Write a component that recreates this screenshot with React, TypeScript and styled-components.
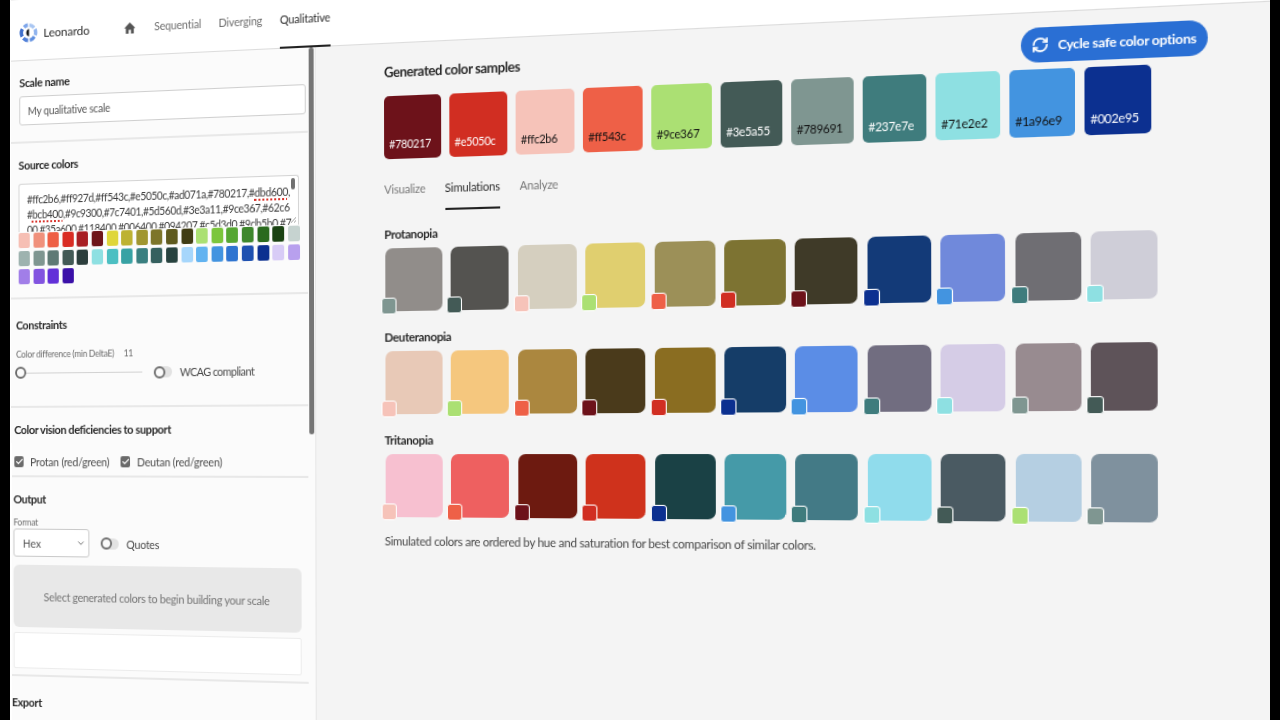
import React from 'react';
import styled, { createGlobalStyle } from 'styled-components';
import { RefreshCw, ChevronDown, Check } from 'lucide-react';

const GlobalStyle = createGlobalStyle`
  html, body {
    margin: 0;
    padding: 0;
    background: #000;
  }
  * {
    box-sizing: border-box;
  }
`;

const Stage = styled.div`
  width: 1280px;
  height: 720px;
  overflow: hidden;
  background: #fff;
  border-left: 10px solid #000;
  border-right: 10px solid #000;
`;

const Page = styled.div`
  width: 1200px;
  height: 760px;
  display: flex;
  flex-direction: column;
  padding-top: 6px;
  background: #fff;
  color: #2c2c2c;
  font-family: 'Lato', 'Noto Sans', sans-serif;
  transform-origin: 630px 440px;
  transform: perspective(1000px) rotateY(-6.4deg) rotateZ(-0.1deg) scale(1.08);
  border-top: 1px solid #dedede;
`;

const Header = styled.header`
  height: 55px;
  flex: none;
  display: flex;
  align-items: center;
  padding-left: 9px;
  background: #fff;
  border-bottom: 1px solid #dcdcdc;
`;

const Brand = styled.div`
  display: flex;
  align-items: center;
  gap: 6px;
  width: 111px;
  font-size: 12.2px;
  letter-spacing: -0.1px;
`;

const NavLink = styled.a<{ $active?: boolean }>`
  height: 55px;
  display: flex;
  align-items: center;
  margin-right: 18px;
  font-size: 11px;
  letter-spacing: -0.2px;
  color: ${(p) => (p.$active ? '#2c2c2c' : '#6f6f6f')};
  border-bottom: 2px solid ${(p) => (p.$active ? '#222' : 'transparent')};
  margin-bottom: -1px;
`;

const HomeLink = styled.span`
  display: flex;
  margin-right: 19px;
  color: #555;
`;

const Body = styled.div`
  flex: 1;
  display: flex;
  min-height: 0;
`;

const Sidebar = styled.aside`
  width: 317px;
  flex: none;
  display: flex;
  background: #fbfbfb;
  border-right: 1px solid #e6e6e6;
`;

const SideContent = styled.div`
  flex: 1;
  min-width: 0;
`;

const ScrollTrack = styled.div`
  width: 7px;
  flex: none;
  padding: 0 1px;
`;

const ScrollThumb = styled.div`
  height: 372px;
  border-radius: 3px;
  background: #757575;
`;

const Section = styled.section<{ $h: number; $indent: number; $top: number }>`
  height: ${(p) => p.$h}px;
  padding: ${(p) => p.$top}px 0 0 ${(p) => p.$indent}px;
  border-bottom: 2px solid #e8e8e8;
`;

const Label = styled.div`
  font-size: 11.5px;
  line-height: 14px;
  font-weight: 700;
  color: #2a2a2a;
  letter-spacing: -0.38px;
`;

const TextInput = styled.div`
  margin-top: 6px;
  width: 298px;
  height: 29px;
  padding-left: 8px;
  display: flex;
  align-items: center;
  font-size: 10.6px;
  letter-spacing: -0.2px;
  color: #555;
  background: #fff;
  border: 1px solid #cfcfcf;
  border-radius: 3px;
`;

const ColorArea = styled.div`
  position: relative;
  margin-top: 11px;
  width: 292px;
  height: 48px;
  padding: 8px 0 0 8px;
  overflow: hidden;
  font-size: 10.6px;
  line-height: 15px;
  letter-spacing: -0.4px;
  color: #3a3a3a;
  white-space: nowrap;
  background: #fff;
  border: 1px solid #d4d4d4;
  border-bottom: none;
  border-radius: 3px 3px 0 0;
`;

const Misspelt = styled.span`
  text-decoration: underline dotted #d8322a 1.5px;
  text-underline-offset: 2px;
`;

const AreaThumb = styled.span`
  position: absolute;
  top: 2px;
  right: 3px;
  width: 4px;
  height: 11px;
  border-radius: 2px;
  background: #707070;
`;

const ResizeGrip = styled.svg`
  position: absolute;
  right: 1px;
  bottom: 1px;
`;

const Palette = styled.div`
  margin-top: 1px;
  display: grid;
  grid-template-columns: repeat(19, 12px);
  grid-auto-rows: 15px;
  column-gap: 3.6px;
  row-gap: 3px;
`;

const Chip = styled.span<{ $color: string }>`
  border-radius: 2px;
  background: ${(p) => p.$color};
`;

const SmallText = styled.div<{ $mt?: number }>`
  margin-top: ${(p) => p.$mt ?? 0}px;
  font-size: 9px;
  line-height: 12px;
  color: #6e6e6e;
  letter-spacing: -0.33px;
`;

const FieldRow = styled.div<{ $gap: number; $mt?: number }>`
  display: flex;
  align-items: center;
  gap: ${(p) => p.$gap}px;
  margin-top: ${(p) => p.$mt ?? 0}px;
`;

const DiffRow = styled(SmallText)`
  display: flex;
  gap: 10px;
`;

const SliderTrack = styled.div`
  position: relative;
  width: 134px;
  height: 1px;
  background: #d2d2d2;
`;

const SliderThumb = styled.span`
  position: absolute;
  left: -1px;
  top: -6px;
  width: 12px;
  height: 12px;
  border-radius: 50%;
  background: #fbfbfb;
  border: 2px solid #6e6e6e;
`;

const ToggleTrack = styled.span`
  position: relative;
  width: 19px;
  height: 11px;
  border-radius: 6px;
  background: #e2e2e2;
`;

const ToggleKnob = styled.span`
  position: absolute;
  left: 0;
  top: -0.5px;
  width: 12px;
  height: 12px;
  border-radius: 50%;
  background: #fbfbfb;
  border: 2px solid #6e6e6e;
`;

const OptionText = styled.span`
  font-size: 11px;
  color: #4a4a4a;
  letter-spacing: -0.2px;
`;

const WcagText = styled(OptionText)`
  letter-spacing: -0.55px;
`;

const CheckBox = styled.span`
  width: 10px;
  height: 11px;
  display: flex;
  align-items: center;
  justify-content: center;
  border-radius: 2px;
  background: #6a6a6a;
  color: #fff;
`;

const CheckOption = styled.label`
  display: flex;
  align-items: center;
  gap: 7px;
`;

const Select = styled.div`
  width: 81px;
  height: 28px;
  padding: 0 3px 0 9px;
  display: flex;
  align-items: center;
  justify-content: space-between;
  font-size: 11px;
  color: #555;
  background: #fff;
  border: 1px solid #c9c9c9;
  border-radius: 3px;
`;

const EmptyBox = styled.div`
  margin-top: 8px;
  width: 300px;
  height: 62px;
  display: flex;
  align-items: center;
  justify-content: center;
  font-size: 11.2px;
  letter-spacing: -0.3px;
  color: #757575;
  background: #e8e8e8;
  border-radius: 6px;
`;

const BlankInput = styled.div`
  margin-top: 5px;
  width: 300px;
  height: 36px;
  background: #fff;
  border: 1px solid #ececec;
  border-radius: 2px;
`;

const Main = styled.main`
  flex: 1;
  min-width: 0;
  padding: 10px 72px 0 68px;
  background: #f4f4f4;
`;

const TopRow = styled.div`
  display: flex;
  align-items: center;
  justify-content: space-between;
  height: 36px;
  margin-bottom: 4px;
`;

const Title = styled.h2`
  margin: 0 0 3px;
  font-size: 13px;
  font-weight: 700;
  letter-spacing: -0.45px;
  color: #2a2a2a;
`;

const CycleButton = styled.button`
  width: 157px;
  height: 31px;
  display: flex;
  align-items: center;
  justify-content: center;
  gap: 7px;
  border: none;
  border-radius: 16px;
  font-family: inherit;
  font-size: 11.6px;
  font-weight: 700;
  letter-spacing: -0.25px;
  color: #fff;
  background: #2a6fd4;
`;

const SampleRow = styled.div`
  display: flex;
  gap: 8px;
`;

const Sample = styled.div<{ $bg: string; $fg: string }>`
  width: 56px;
  height: 60px;
  display: flex;
  align-items: flex-end;
  padding: 0 0 8px 5px;
  border-radius: 5px;
  font-size: 10.6px;
  letter-spacing: -0.25px;
  color: ${(p) => p.$fg};
  background: ${(p) => p.$bg};
`;

const Tabs = styled.div`
  margin-top: 14px;
  display: flex;
  gap: 19px;
  height: 37px;
`;

const Tab = styled.span<{ $active?: boolean }>`
  display: flex;
  align-items: center;
  height: 36px;
  padding-bottom: 6px;
  font-size: 11px;
  letter-spacing: -0.2px;
  color: ${(p) => (p.$active ? '#2c2c2c' : '#777')};
  border-bottom: 2px solid ${(p) => (p.$active ? '#222' : 'transparent')};
`;

const SimBlock = styled.div`
  margin-top: 14px;
  & + & {
    margin-top: 18px;
  }
`;

const SimRow = styled.div`
  margin-top: 6px;
  display: flex;
  gap: 8.4px;
  padding-left: 1px;
`;

const SimSwatch = styled.div<{ $bg: string }>`
  position: relative;
  width: 56px;
  height: 60px;
  border-radius: 7px;
  background: ${(p) => p.$bg};
`;

const SimMini = styled.span<{ $bg: string }>`
  position: absolute;
  left: -4px;
  bottom: -3px;
  width: 15px;
  height: 16px;
  border-radius: 3px;
  background: ${(p) => p.$bg};
  border: 1px solid #fff;
`;

const Footnote = styled.p`
  margin: 16px 0 0;
  font-size: 11.3px;
  letter-spacing: -0.34px;
  color: #4a4a4a;
`;

const paletteColors = [
  '#f6bfb4', '#f0917c', '#ee5f45', '#d92d24', '#a81f24', '#6f1519', '#dfd63a', '#bdb232', '#a09630', '#7d752a',
  '#5f5a1e', '#403c14', '#abe073', '#7cc63c', '#56a632', '#3e872c', '#2a6a1e', '#1a4212', '#c6d3d0',
  '#9eb3af', '#7f9691', '#5f7a75', '#435a56', '#2c3e3c', '#8ee0e2', '#4cbfc2', '#38a2a4', '#3a7f80', '#35605f',
  '#27423f', '#a6d6fb', '#62b3f0', '#4394e0', '#2f74d0', '#1f51b0', '#0c3090', '#d8ccf6', '#b8a0ee',
  '#a17ee8', '#8254e0', '#6230d8', '#3a10a8',
];

const samples = [
  { hex: '#780217', bg: '#6d121a', fg: '#fff' },
  { hex: '#e5050c', bg: '#d12e22', fg: '#fff' },
  { hex: '#ffc2b6', bg: '#f6c3b9', fg: '#111' },
  { hex: '#ff543c', bg: '#ee6047', fg: '#111' },
  { hex: '#9ce367', bg: '#abe073', fg: '#111' },
  { hex: '#3e5a55', bg: '#435a56', fg: '#fff' },
  { hex: '#789691', bg: '#7f9691', fg: '#111' },
  { hex: '#237e7e', bg: '#3f7c7d', fg: '#fff' },
  { hex: '#71e2e2', bg: '#8ee0e2', fg: '#111' },
  { hex: '#1a96e9', bg: '#4394e0', fg: '#111' },
  { hex: '#002e95', bg: '#0c3090', fg: '#fff' },
];

const simulations = [
  {
    name: 'Protanopia',
    big: ['#918d8a', '#545350', '#d5cfbf', '#e0cf6f', '#9c9058', '#7d7332', '#3f3a28', '#133a78', '#7089db', '#6f6e73', '#cfced8'],
    mini: ['#7f9691', '#435a56', '#f6c3b9', '#abe073', '#ee6047', '#d12e22', '#6d121a', '#0c3090', '#4394e0', '#3f7c7d', '#8ee0e2'],
  },
  {
    name: 'Deuteranopia',
    big: ['#e8c9b7', '#f5c77e', '#ab873f', '#4a3a1b', '#8a6d21', '#153d68', '#5b8de6', '#716d80', '#d5cce6', '#988b90', '#5e5359'],
    mini: ['#f6c3b9', '#abe073', '#ee6047', '#6d121a', '#d12e22', '#0c3090', '#4394e0', '#3f7c7d', '#8ee0e2', '#7f9691', '#435a56'],
  },
  {
    name: 'Tritanopia',
    big: ['#f7c0d0', '#ee6060', '#6d1a10', '#cf321c', '#1a4145', '#459aa8', '#437a86', '#90dcec', '#4a5a62', '#b5cfe2', '#7f919e'],
    mini: ['#f6c3b9', '#ee6047', '#6d121a', '#d12e22', '#0c3090', '#4394e0', '#3f7c7d', '#8ee0e2', '#435a56', '#abe073', '#7f9691'],
  },
];

function Logo() {
  return (
    <svg width="20" height="20" viewBox="0 0 20 20" aria-hidden="true">
      <g fill="none" strokeWidth="3.6">
        <path d="M5.2 4.3A7.6 7.6 0 0 1 9.4 2.4" stroke="#7ea6ea" />
        <path d="M11 2.5A7.6 7.6 0 0 1 16 5.4" stroke="#a9c6f2" />
        <path d="M16.9 6.9A7.6 7.6 0 0 1 17.2 12.8" stroke="#8fb3ee" />
        <path d="M16.3 14.2A7.6 7.6 0 0 1 11.4 17.5" stroke="#5f8fe0" />
        <path d="M9.6 17.6A7.6 7.6 0 0 1 4.4 15.2" stroke="#4f7fd8" />
        <path d="M3.2 13.6A7.6 7.6 0 0 1 3.4 6.2" stroke="#3f6fcc" />
      </g>
      <path d="M10.6 6.2a3.9 3.9 0 0 0 0 7.6z" fill="#15181c" />
    </svg>
  );
}

function HomeIcon() {
  return (
    <svg width="13" height="13" viewBox="0 0 14 14" aria-hidden="true">
      <path d="M7 1 0.6 7.2h1.9V13h3.2V9h2.6v4h3.2V7.2h1.9z" fill="currentColor" />
    </svg>
  );
}

function Toggle() {
  return (
    <ToggleTrack>
      <ToggleKnob />
    </ToggleTrack>
  );
}

export default function App() {
  return (
    <Stage>
      <GlobalStyle />
      <Page>
        <Header>
          <Brand>
            <Logo />
            Leonardo
          </Brand>
          <HomeLink>
            <HomeIcon />
          </HomeLink>
          <NavLink>Sequential</NavLink>
          <NavLink>Diverging</NavLink>
          <NavLink $active>Qualitative</NavLink>
        </Header>
        <Body>
          <Sidebar>
            <SideContent>
              <Section $h={82} $indent={9} $top={15}>
                <Label>Scale name</Label>
                <TextInput>My qualitative scale</TextInput>
              </Section>
              <Section $h={155} $indent={8} $top={15}>
                <Label>Source colors</Label>
                <ColorArea>
                  #ffc2b6,#ff927d,#ff543c,#e5050c,#ad071a,#780217,#<Misspelt>dbd600</Misspelt>,
                  <br />
                  #<Misspelt>bcb400</Misspelt>,#9c9300,#7c7401,#5d560d,#3e3a11,#9ce367,#62c6
                  <br />
                  00,#35a600,#118400,#006400,#094207,#c5d3d0,#9db5b0,#7
                  <AreaThumb />
                  <ResizeGrip width="7" height="7" viewBox="0 0 7 7" aria-hidden="true">
                    <path d="M1 6 6 1M4 6 6 4" stroke="#888" strokeWidth="0.8" />
                  </ResizeGrip>
                </ColorArea>
                <Palette>
                  {paletteColors.map((c, i) => (
                    <Chip key={i} $color={c} />
                  ))}
                </Palette>
              </Section>
              <Section $h={108} $indent={5} $top={19}>
                <Label>Constraints</Label>
                <DiffRow $mt={16}>
                  <span>Color difference (min DeltaE)</span>
                  <span>11</span>
                </DiffRow>
                <FieldRow $gap={12} $mt={6}>
                  <SliderTrack>
                    <SliderThumb />
                  </SliderTrack>
                  <FieldRow $gap={8}>
                    <Toggle />
                    <WcagText>WCAG compliant</WcagText>
                  </FieldRow>
                </FieldRow>
              </Section>
              <Section $h={69} $indent={3} $top={15}>
                <Label>Color vision deficiencies to support</Label>
                <FieldRow $gap={12} $mt={18}>
                  <CheckOption>
                    <CheckBox>
                      <Check size={9} strokeWidth={3} />
                    </CheckBox>
                    <OptionText>Protan (red/green)</OptionText>
                  </CheckOption>
                  <CheckOption>
                    <CheckBox>
                      <Check size={9} strokeWidth={3} />
                    </CheckBox>
                    <OptionText>Deutan (red/green)</OptionText>
                  </CheckOption>
                </FieldRow>
              </Section>
              <Section $h={198} $indent={2} $top={15}>
                <Label>Output</Label>
                <SmallText $mt={10}>Format</SmallText>
                <FieldRow $gap={12}>
                  <Select>
                    Hex
                    <ChevronDown size={10} color="#555" />
                  </Select>
                  <FieldRow $gap={8}>
                    <Toggle />
                    <OptionText>Quotes</OptionText>
                  </FieldRow>
                </FieldRow>
                <EmptyBox>Select generated colors to begin building your scale</EmptyBox>
                <BlankInput />
              </Section>
              <Section $h={60} $indent={0} $top={19}>
                <Label>Export</Label>
              </Section>
            </SideContent>
            <ScrollTrack>
              <ScrollThumb />
            </ScrollTrack>
          </Sidebar>
          <Main>
            <TopRow>
              <Title>Generated color samples</Title>
              <CycleButton>
                <RefreshCw size={15} strokeWidth={2.6} />
                Cycle safe color options
              </CycleButton>
            </TopRow>
            <SampleRow>
              {samples.map((s) => (
                <Sample key={s.hex} $bg={s.bg} $fg={s.fg}>
                  {s.hex}
                </Sample>
              ))}
            </SampleRow>
            <Tabs>
              <Tab>Visualize</Tab>
              <Tab $active>Simulations</Tab>
              <Tab>Analyze</Tab>
            </Tabs>
            {simulations.map((sim) => (
              <SimBlock key={sim.name}>
                <Label>{sim.name}</Label>
                <SimRow>
                  {sim.big.map((c, i) => (
                    <SimSwatch key={i} $bg={c}>
                      <SimMini $bg={sim.mini[i]} />
                    </SimSwatch>
                  ))}
                </SimRow>
              </SimBlock>
            ))}
            <Footnote>Simulated colors are ordered by hue and saturation for best comparison of similar colors.</Footnote>
          </Main>
        </Body>
      </Page>
    </Stage>
  );
}
